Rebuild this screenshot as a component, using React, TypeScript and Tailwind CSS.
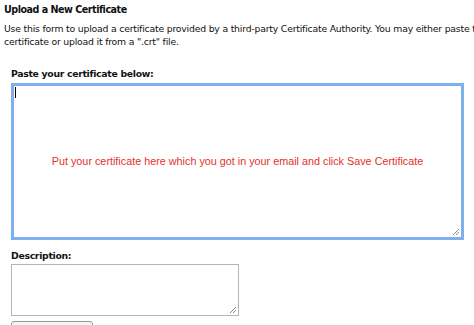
import React from "react";

function ResizeGrip() {
	return (
		<svg
			className="absolute right-[1px] bottom-[1px]"
			width="8"
			height="8"
			viewBox="0 0 8 8"
		>
			<line x1="1" y1="7" x2="7" y2="1" stroke="#8a8a8a" strokeWidth="1" />
			<line x1="4" y1="7" x2="7" y2="4" stroke="#8a8a8a" strokeWidth="1" />
		</svg>
	);
}

export default function App() {
	return (
		<div className="w-[474px] h-[325px] overflow-hidden bg-white text-[#111] font-['DejaVu_Sans',Verdana,sans-serif]">
			<div className="w-[560px] pl-[4px] pt-[3px]">
				<h1 className="text-[9.6px] font-bold leading-[13px] tracking-[-0.5px]">Upload a New Certificate</h1>
				<p className="mt-[6px] text-[9.3px] leading-[13px] tracking-[-0.2px] whitespace-nowrap">
					Use this form to upload a certificate provided by a third-party Certificate Authority. You may either paste the
					<br />
					certificate or upload it from a ".crt" file.
				</p>

				<div className="pl-[7px] mt-[20px]">
					<label className="block text-[9.3px] font-bold leading-[12px] tracking-[-0.3px]">
						Paste your certificate below:
					</label>
					<div className="relative mt-[3px] w-[453px] h-[157px] border-[3px] border-[#7fb0ee] bg-white">
						<span className="absolute left-[1px] top-[1px] w-px h-[11px] bg-black" />
						<div className="h-full flex items-center justify-center">
							<span className="text-[10.8px] text-[#e3312b] font-['Liberation_Sans',Arial,sans-serif]">
								Put your certificate here which you got in your email and click Save Certificate
							</span>
						</div>
						<ResizeGrip />
					</div>

					<label className="block mt-[10px] text-[9.3px] font-bold leading-[12px] tracking-[-0.3px]">
						Description:
					</label>
					<div className="relative mt-[2px] w-[228px] h-[52px] border border-[#b5b5b5] bg-white">
						<ResizeGrip />
					</div>
					<div className="mt-[5px] w-[82px] h-[20px] border border-[#9a9a9a] rounded-[3px] bg-[#f4f4f4]" />
				</div>
			</div>
		</div>
	);
}
